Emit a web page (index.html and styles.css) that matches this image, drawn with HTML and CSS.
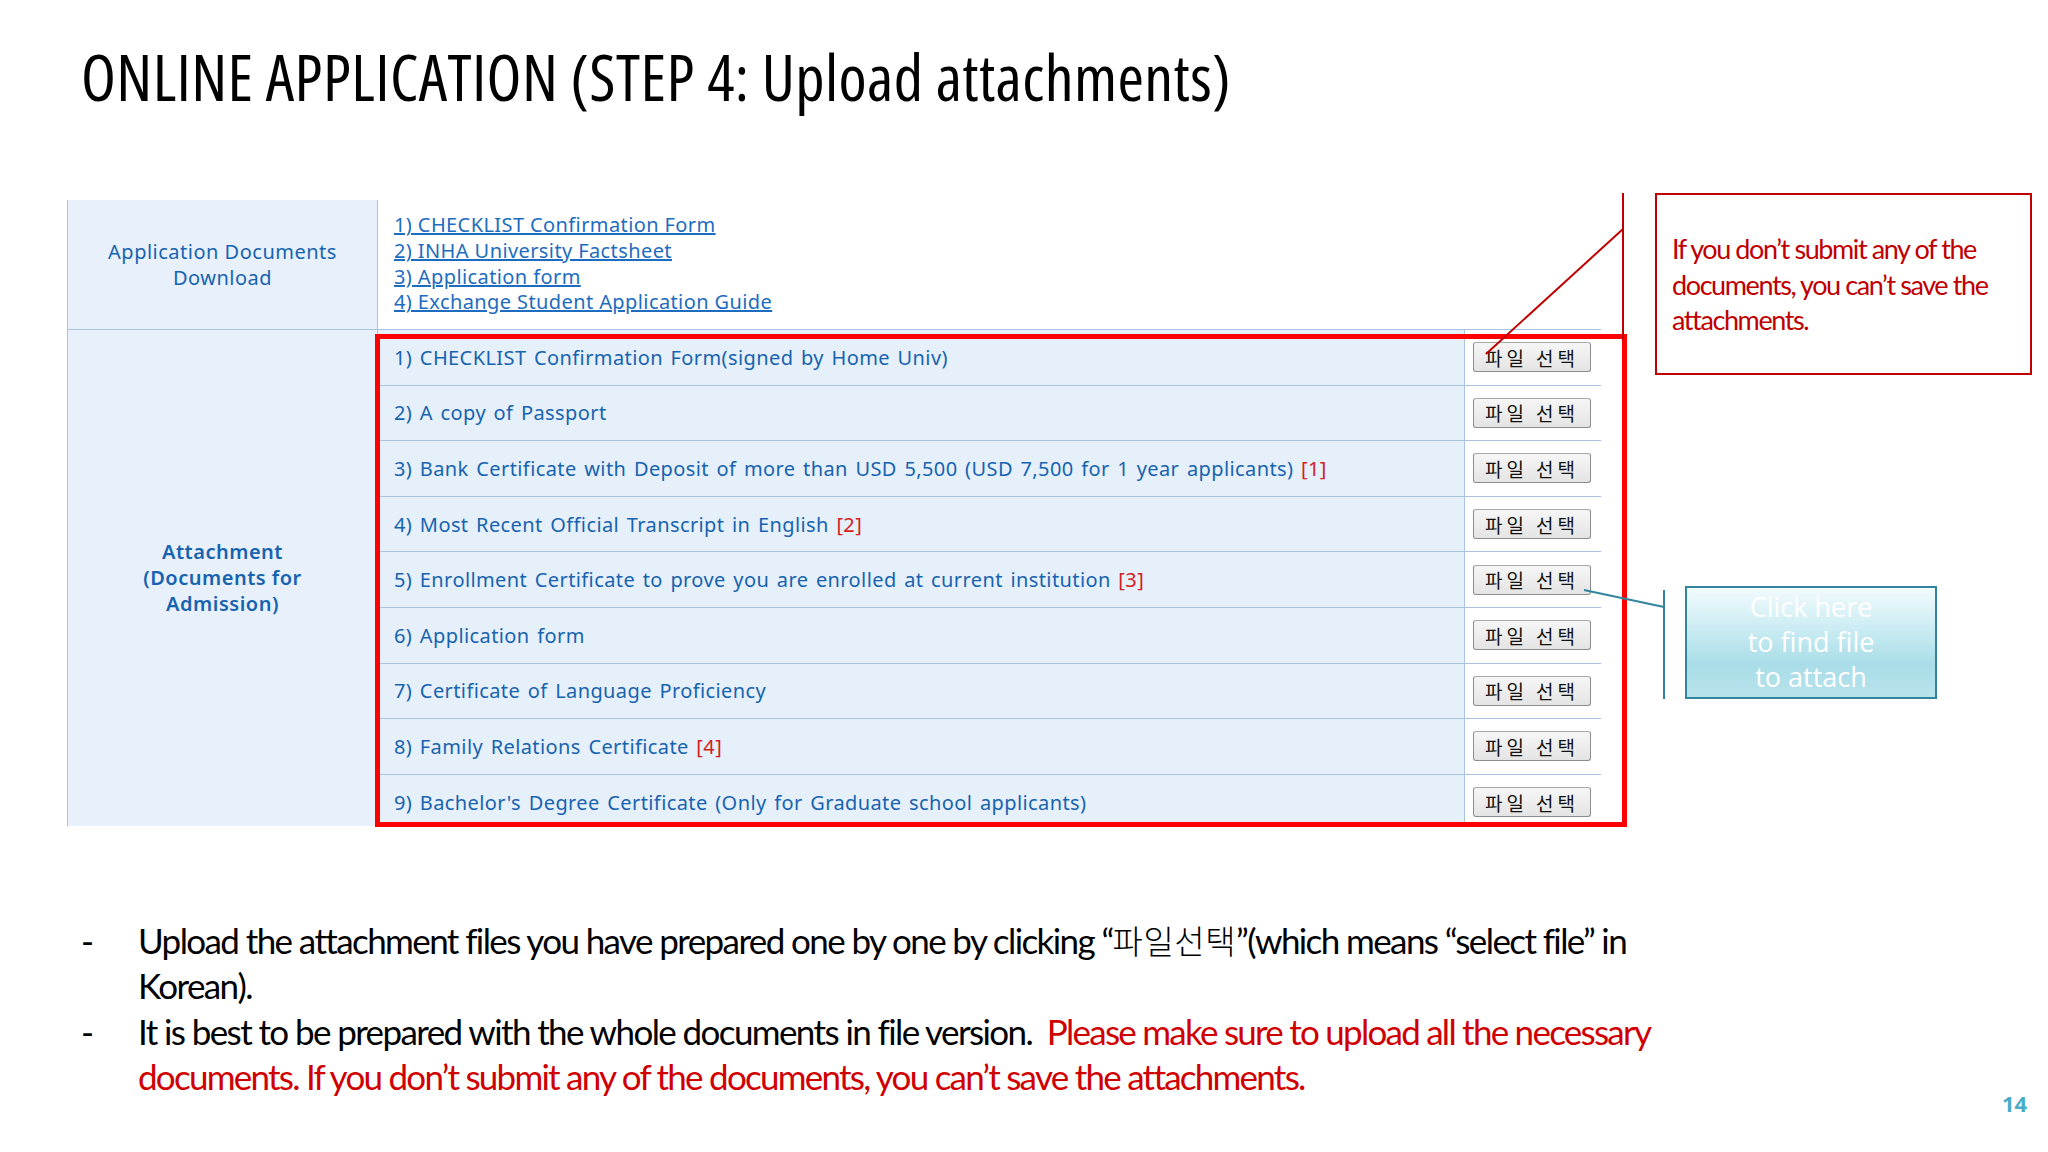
FILE: index.html
```html
<!DOCTYPE html>
<html lang="en">
<head>
<meta charset="utf-8">
<title>ONLINE APPLICATION (STEP 4: Upload attachments)</title>
<link rel="stylesheet" href="styles.css">
</head>
<body>
<div class="slide">
  <h1 class="title">ONLINE APPLICATION (STEP 4: Upload attachments)</h1>

  <div class="tbl">
    <div class="cell label label-top">Application Documents<br>Download</div>
    <div class="cell links">
      <a href="#">1) CHECKLIST Confirmation Form</a>
      <a href="#">2) INHA University Factsheet</a>
      <a href="#">3) Application form</a>
      <a href="#">4) Exchange Student Application Guide</a>
    </div>

    <div class="cell label label-att">Attachment<br>(Documents for<br>Admission)</div>

    <div class="cell item"><span>1) CHECKLIST Confirmation Form(signed by Home Univ)</span></div>
    <div class="cell btn-cell"><span class="file-btn">파일 선택</span></div>
    <div class="cell item"><span>2) A copy of Passport</span></div>
    <div class="cell btn-cell"><span class="file-btn">파일 선택</span></div>
    <div class="cell item"><span>3) Bank Certificate with Deposit of more than USD 5,500 (USD 7,500 for 1 year applicants) <span class="ref">[1]</span></span></div>
    <div class="cell btn-cell"><span class="file-btn">파일 선택</span></div>
    <div class="cell item"><span>4) Most Recent Official Transcript in English <span class="ref">[2]</span></span></div>
    <div class="cell btn-cell"><span class="file-btn">파일 선택</span></div>
    <div class="cell item"><span>5) Enrollment Certificate to prove you are enrolled at current institution <span class="ref">[3]</span></span></div>
    <div class="cell btn-cell"><span class="file-btn">파일 선택</span></div>
    <div class="cell item"><span>6) Application form</span></div>
    <div class="cell btn-cell"><span class="file-btn">파일 선택</span></div>
    <div class="cell item"><span>7) Certificate of Language Proficiency</span></div>
    <div class="cell btn-cell"><span class="file-btn">파일 선택</span></div>
    <div class="cell item"><span>8) Family Relations Certificate <span class="ref">[4]</span></span></div>
    <div class="cell btn-cell"><span class="file-btn">파일 선택</span></div>
    <div class="cell item last"><span>9) Bachelor's Degree Certificate (Only for Graduate school applicants)</span></div>
    <div class="cell btn-cell last"><span class="file-btn">파일 선택</span></div>
  </div>

  <ul class="notes">
    <li><span class="dash">-</span><span class="note-text">Upload the attachment files you have prepared one by one by clicking “<span class="ko">파일선택</span>”(which means “select file” in<br>Korean).</span></li>
    <li><span class="dash">-</span><span class="note-text">It is best to be prepared with the whole documents in file version.&nbsp; <span class="warn">Please make sure to upload all the necessary</span><br><span class="warn">documents. If you don’t submit any of the documents, you can’t save the attachments.</span></span></li>
  </ul>

  <!-- annotations over the table -->
  <div class="red-frame"></div>
  <svg class="lines" width="2048" height="1152" viewBox="0 0 2048 1152">
    <line x1="1623" y1="193" x2="1623" y2="340" stroke="#c00000" stroke-width="2"/>
    <line x1="1623" y1="229" x2="1486" y2="354" stroke="#c00000" stroke-width="2"/>
    <line x1="1664" y1="590" x2="1664" y2="699" stroke="#31859c" stroke-width="2"/>
    <line x1="1584" y1="590" x2="1664" y2="607" stroke="#31859c" stroke-width="2"/>
  </svg>
  <div class="callout-red">If you don’t submit any of the documents, you can’t save the attachments.</div>
  <div class="callout-teal">Click here<br>to find file<br>to attach</div>

  <div class="page-num">14</div>
</div>
</body>
</html>
```

FILE: styles.css
```css
html, body {
  margin: 0;
  padding: 0;
  background: #ffffff;
}

.slide {
  position: relative;
  width: 2048px;
  height: 1152px;
  overflow: hidden;
  background: #ffffff;
  font-family: "Lato", "Noto Sans", sans-serif;
}

.title {
  margin: 0;
  padding: 41px 0 0 81px;
  height: 200px;
  box-sizing: border-box;
  font-family: "Open Sans", "Lato", sans-serif;
  font-stretch: 75%;
  font-weight: 400;
  font-size: 64px;
  line-height: 72px;
  letter-spacing: 0.4px;
  white-space: nowrap;
  color: #000000;
}

/* ---------- table ---------- */
.tbl {
  margin-left: 67px;
  width: 1533px;
  display: grid;
  grid-template-columns: 310px 1087px 136px;
  grid-template-rows: 130px repeat(8, 55.6px) 51px;
  font-family: "Noto Sans", "DejaVu Sans", sans-serif;
  font-size: 20px;
  color: #1763b0;
  border-left: 1px solid #a9c3df;
  box-sizing: border-box;
}

.cell {
  box-sizing: border-box;
}

.label {
  background: #e8f1fb;
  border-right: 1px solid #a9c3df;
  display: flex;
  align-items: center;
  justify-content: center;
  text-align: center;
  line-height: 26px;
  letter-spacing: 0.5px;
}

.label-top {
  border-bottom: 1px solid #a9c3df;
}

.label-att {
  grid-row: 2 / span 9;
  font-weight: 600;
}

.links {
  grid-column: 2 / span 2;
  border-bottom: 1px solid #a9c3df;
  display: flex;
  flex-direction: column;
  justify-content: center;
  padding-left: 16px;
  padding-bottom: 2px;
  line-height: 25.6px;
}

.links a {
  color: #1d6cc0;
  text-decoration: underline;
  letter-spacing: 0.4px;
}

.item {
  background: #e6f0fa;
  border-bottom: 1px solid #a9c3df;
  border-right: 1px solid #a9c3df;
  display: flex;
  align-items: center;
  padding-left: 16px;
  white-space: nowrap;
  letter-spacing: 0.4px;
  word-spacing: 2px;
}

.ref {
  color: #d42020;
}

.btn-cell {
  background: #ffffff;
  border-bottom: 1px solid #a9c3df;
  display: flex;
  align-items: center;
  padding-left: 8px;
}

.last {
  border-bottom: none;
  padding-top: 4px;
}

.file-btn {
  display: inline-flex;
  align-items: center;
  justify-content: center;
  width: 118px;
  height: 30px;
  box-sizing: border-box;
  border: 1px solid #8c8c8c;
  border-top-color: #a8a8a8;
  border-radius: 3px;
  background: linear-gradient(#f6f6f6, #e4e4e4);
  font-family: "Noto Sans CJK KR", sans-serif;
  font-size: 19px;
  letter-spacing: 4px;
  color: #111111;
}

/* ---------- notes ---------- */
.notes {
  list-style: none;
  margin: 92px 0 0 0;
  padding: 0 0 0 81px;
  width: 1650px;
  font-family: "Lato", "Open Sans", "Noto Sans CJK KR", sans-serif;
  font-size: 35px;
  line-height: 45.5px;
  letter-spacing: -1.6px;
  color: #000000;
}

.notes li {
  display: flex;
}

.dash {
  width: 57px;
  flex: none;
}

.note-text {
  white-space: nowrap;
}

.ko {
  font-family: "Noto Sans CJK KR", sans-serif;
  font-weight: 300;
  font-size: 33px;
  letter-spacing: 0.5px;
}

.warn {
  color: #d00000;
  letter-spacing: -1.75px;
}

/* ---------- annotations ---------- */
.red-frame {
  position: absolute;
  left: 375px;
  top: 334px;
  width: 1252px;
  height: 493px;
  box-sizing: border-box;
  border: 5px solid #ff0000;
}

.lines {
  position: absolute;
  left: 0;
  top: 0;
  pointer-events: none;
}

.callout-red {
  position: absolute;
  left: 1655px;
  top: 193px;
  width: 377px;
  height: 182px;
  box-sizing: border-box;
  border: 2px solid #c00000;
  padding: 36px 14px 0 15px;
  font-family: "Lato", "Open Sans", sans-serif;
  font-size: 27px;
  line-height: 35.5px;
  letter-spacing: -1.4px;
  color: #c00000;
}

.callout-teal {
  position: absolute;
  left: 1685px;
  top: 586px;
  width: 252px;
  height: 113px;
  box-sizing: border-box;
  border: 2px solid #31859c;
  background: linear-gradient(#f2fbfd 0%, #c8ebf2 40%, #a9dde8 70%, #b8e3ec 100%);
  display: flex;
  align-items: center;
  justify-content: center;
  text-align: center;
  font-family: "Open Sans", "Lato", sans-serif;
  font-size: 27px;
  line-height: 35px;
  color: #ffffff;
  padding-bottom: 2px;
}

.page-num {
  position: absolute;
  left: 2002px;
  top: 1088px;
  font-family: "Open Sans", sans-serif;
  font-weight: 700;
  font-size: 22px;
  color: #4bacc6;
}
```
